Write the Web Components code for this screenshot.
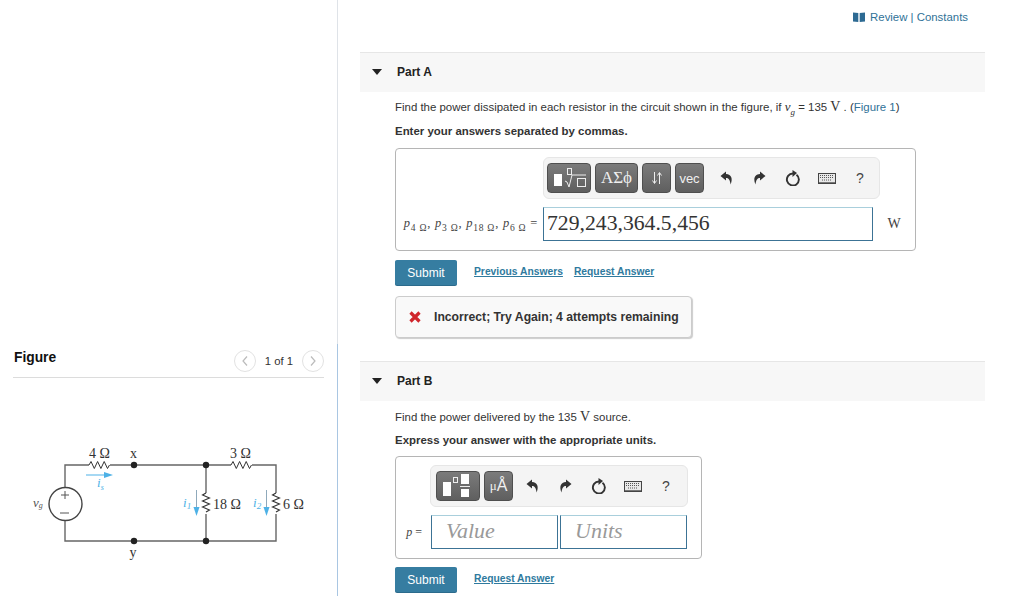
<!DOCTYPE html>
<html lang="en">
<head>
<meta charset="UTF-8">
<title>Part A / Part B</title>
<style>
  html, body { margin: 0; height: 596px; overflow: hidden; background: #fff; }
  body { font-family: "Liberation Sans", Arial, sans-serif; color: #222; }
</style>
<script>
  // small helper, every element below has its markup + styles in the class
  function define(name, css, html) {
    class El extends HTMLElement {
      constructor() {
        super();
        this.attachShadow({ mode: "open" });
        const t = document.createElement("template");
        t.innerHTML = `<style>${css}</style>${html}`;
        this.shadowRoot.appendChild(t.content.cloneNode(true));
      }
    }
    customElements.define(name, El);
  }

  const BASE = `:host{display:block;font-family:"Liberation Sans",Arial,sans-serif;box-sizing:border-box}`;

  define("quiz-page", `
    :host{display:grid;grid-template-columns:338px 1fr;height:596px;overflow:hidden}
    .left{border-right:1px solid #dfe3e8;box-sizing:border-box;height:596px;padding-top:344px;position:relative}
    .left::after{content:"";position:absolute;right:-1px;top:344px;bottom:0;width:1px;background:#a9c6e2}
    .right{padding:0 39px 0 22px;box-sizing:border-box}
  `, `<div class="left"><slot name="left"></slot></div><div class="right"><slot></slot></div>`);

  define("figure-pane", BASE + `
    :host{padding:0 13px}
    .head{display:flex;justify-content:space-between;align-items:center;height:33px;border-bottom:1px solid #dcdcdc}
    h2{margin:0;font-size:13.8px;font-weight:bold;color:#111;position:relative;top:-3px;left:1px}
    .pager{display:flex;align-items:center;font-size:11.300px;color:#333;gap:9px}
    .c{width:22px;height:22px;border:1px solid #e2e2e2;border-radius:50%;box-sizing:border-box;display:flex;align-items:center;justify-content:center}
    svg{display:block}
    .fig{margin:0 -13px}
  `, `<div class="head"><h2>Figure</h2>
    <div class="pager">
      <span class="c"><svg width="8" height="12" viewBox="0 0 8 12"><path d="M6 1.500 2 6l4 4.500" fill="none" stroke="#bbb" stroke-width="1.200"/></svg></span>
      <span>1 of 1</span>
      <span class="c"><svg width="8" height="12" viewBox="0 0 8 12"><path d="M2 1.500 6 6l-4 4.500" fill="none" stroke="#bbb" stroke-width="1.200"/></svg></span>
    </div></div><div class="fig"><slot></slot></div>`);

  define("circuit-fig", `:host{display:block;height:218px} svg{display:block} text{font-family:"Liberation Serif",serif}`, `
    <svg width="338" height="218" viewBox="0 378 338 218">
      <g fill="none" stroke="#666" stroke-width="1.400">
        <path d="M65 488V465H89M110 465H231M252 465H276V493M276 514V541H65V520M206 465V493M206 514V541"/>
        <path d="M89 465l2-3.500 3.300 7 3.300-7 3.300 7 3.300-7 3.300 7 2-3.500M231 465l2-3.500 3.300 7 3.300-7 3.300 7 3.300-7 3.300 7 2-3.500" stroke="#333" stroke-width="1"/>
        <path d="M206 493l-3.500 2 7 3-7 3 7 3-7 3 7 3-3.500 2M276 493l-3.500 2 7 3-7 3 7 3-7 3 7 3-3.500 2" stroke="#333" stroke-width="1.100"/>
        <circle cx="65.500" cy="504" r="16.500" stroke="#444"/>
        <path d="M61 495h8M65 491v8M60 513h9" stroke="#555" stroke-width="1"/>
      </g>
      <g fill="#222">
        <circle cx="134" cy="465" r="3.200"/><circle cx="206" cy="465" r="3.200"/>
        <circle cx="134" cy="541" r="3.200"/><circle cx="206" cy="541" r="3.200"/>
      </g>
      <g fill="#4db1e6" stroke="none">
        <path d="M86 474.500h18v1h-18z"/><path d="M104 472l9 3-9 3z"/>
        <path d="M196 490h1v20h-1z" fill="#8fa9bb"/><path d="M193.500 507l3 9 3-9z"/>
        <path d="M266 490h1v20h-1z" fill="#8fa9bb"/><path d="M263.500 507l3 9 3-9z"/>
      </g>
      <g font-size="14" fill="#333">
        <text x="89" y="458">4 Ω</text>
        <text x="130" y="458">x</text>
        <text x="230" y="458">3 Ω</text>
        <text x="213" y="509">18 Ω</text>
        <text x="283" y="509">6 Ω</text>
        <text x="129.500" y="557">y</text>
      </g>
      <g font-size="13" font-style="italic" fill="#4db1e6">
        <text x="97" y="487">i<tspan font-size="8" dy="3">s</tspan></text>
        <text x="183" y="507">i<tspan font-size="9" dy="2">1</tspan></text>
        <text x="253" y="507">i<tspan font-size="9" dy="2">2</tspan></text>
      </g>
      <text x="33" y="507" font-size="13" font-style="italic" fill="#555">v<tspan font-size="8" dy="1">g</tspan></text>
    </svg>`);

  define("review-bar", BASE + `
    :host{display:flex;justify-content:flex-end;align-items:center;gap:5px;height:34px;padding:0 17px 0 0;margin-bottom:18px;font-size:11.400px;color:#2f7197}
    svg{display:block}
  `, `<svg width="12" height="10" viewBox="0 0 12 10"><path d="M0 .5 5.300 1v9L0 9.500zM6.700 1 12 .5v9L6.700 10z" fill="#2d6a93"/></svg><span>Review | Constants</span>`);

  define("part-section", BASE + `
    .h{height:40px;background:#f7f7f7;border-top:1px solid #e6e6e6;box-sizing:border-box;display:flex;align-items:center;padding:0 0 2px 12px;font-size:12px;font-weight:bold;color:#222}
    .tri{width:0;height:0;border:5px solid transparent;border-top:6px solid #222;border-bottom:0;margin-right:15px}
    .b{padding-left:35px;width:590px}
  `, `<div class="h"><span class="tri"></span><slot name="title"></slot></div><div class="b"><slot></slot></div>`);

  define("prompt-text", BASE + `
    :host{font-size:11.450px;color:#333;line-height:14px}
    .l{height:14px;margin-top:var(--first,8px);white-space:nowrap}
    .a{font-weight:bold;color:#333;margin-top:var(--second,10px)}
  `, `<div class="l"><slot></slot></div><div class="l a"><slot name="bold"></slot></div>`);

  define("math-tools", BASE + `
    :host{display:flex;align-items:center;background:#f4f4f4;border:1px solid #e6e6e6;border-radius:6px;box-sizing:border-box;height:42px;padding:0 0 0 var(--pad,5px)}
    .g{display:flex;gap:4px}
    .ic{display:flex;align-items:center;margin-left:var(--ic,5px)}
    .ic span{width:33.300px;display:flex;justify-content:center}
    svg{display:block}
    .q{font-size:14px;color:#444}
  `, `<div class="g"><slot></slot></div><div class="ic">
      <span><svg width="13" height="14" viewBox="0 0 13 14"><path d="M6 .5.500 5 6 9.500V7c2.500 0 4 1.700 4.500 6.500C13 8 11.500 3.200 6 3z" fill="#333"/></svg></span>
      <span><svg width="13" height="14" viewBox="0 0 13 14"><path d="M7 .5 12.500 5 7 9.500V7C4.500 7 3 8.700 2.500 13.500 0 8 1.500 3.200 7 3z" fill="#333"/></svg></span>
      <span><svg width="16" height="16" viewBox="0 0 16 16"><path d="M8 3.500a6 6 0 1 0 3.500 1.200" fill="none" stroke="#333" stroke-width="1.900"/><path d="M7.500 0v7L12 3z" fill="#333"/></svg></span>
      <span><svg width="18" height="11" viewBox="0 0 18 11"><rect x=".5" y=".5" width="17" height="10" fill="#e8e8e8" stroke="#444"/><path d="M2 2.500h14M2 4.500h14M4 7h10" stroke="#555" stroke-dasharray="1 1"/><path d="M1 9.500h16" stroke="#777"/></svg></span>
      <span class="q">?</span></div>`);

  define("tool-btn", `
    :host{display:flex;align-items:center;justify-content:center;height:30px;box-sizing:border-box;border:1px solid #4f4f4f;border-radius:4px;background:linear-gradient(#7b7b7b,#5f5f5f);color:#f0f0f0;font-size:13px;font-family:"Liberation Sans",Arial,sans-serif}
    ::slotted(span){font-family:"Liberation Serif",serif;font-size:16px}
    svg{display:block}
  `, `<slot></slot>`);

  define("answer-box", BASE + `
    :host{border:1px solid #b5b5b5;border-radius:4px;box-sizing:border-box;padding:8px 0 9px 0;margin-top:var(--top,10px)}
    .bar{display:flex;margin-bottom:8px}
    .row{display:flex;align-items:center;height:34px}
  `, `<div class="bar"><slot name="tools"></slot></div><div class="row"><slot></slot></div>`);

  define("math-label", `
    :host{display:flex;align-items:baseline;justify-content:flex-end;align-self:center;font-family:"Liberation Serif",serif;font-size:12.500px;color:#444;white-space:pre;padding-right:5px;box-sizing:border-box}
    ::slotted(i){font-style:italic}
  `, `<div><slot></slot></div>`);

  define("field-box", `
    :host{display:flex;align-items:center;box-sizing:border-box;height:34px;padding-bottom:2px;background:#fff;border:1px solid #3c7395;border-top-color:#a9cfdc;font-family:"Liberation Serif",serif;font-size:21.700px;color:#333;padding-left:3px;white-space:nowrap}
    :host([empty]){color:#999;font-style:italic;font-size:22px;padding-left:14px}
  `, `<slot></slot>`);

  define("action-row", BASE + `
    :host{display:flex;align-items:flex-start;margin-top:var(--top,9px);height:25px;font-size:10.300px}
    .s{width:62px;height:25px;background:#367da1;color:#fff;border-radius:2px;font-size:12px;display:flex;align-items:center;justify-content:center;margin-right:17px;box-shadow:0 1px 0 #2c6b8c}
    .ln{display:flex;gap:11px;margin-top:6px;font-weight:bold;color:#2f7a9e}
    ::slotted(a){text-decoration:underline;color:#2f7a9e}
  `, `<div class="s">Submit</div><div class="ln"><slot></slot></div>`);

  define("feedback-card", BASE + `
    :host{display:inline-flex;align-items:center;height:42px;box-sizing:border-box;margin-top:11px;padding:0 12px 0 13px;background:#f9f9f9;border:1px solid #ccc;border-radius:4px;box-shadow:1px 1px 1px #ccc;font-size:12.200px;font-weight:bold;color:#333;white-space:nowrap}
    svg{margin-right:13px;display:block}
  `, `<svg width="12" height="12" viewBox="0 0 12 12"><path d="M1.500 1.500l9 9M10.500 1.500l-9 9" stroke="#d0262c" stroke-width="3.200"/></svg><slot></slot>`);
</script>
</head>
<body>
<quiz-page>
  <figure-pane slot="left"><circuit-fig></circuit-fig></figure-pane>

  <review-bar></review-bar>

  <part-section style="height:309px">
    <span slot="title">Part A</span>
    <prompt-text>Find the power dissipated in each resistor in the circuit shown in the figure, if <i style="font-family:'Liberation Serif',serif;font-size:13px">v<sub style="font-size:9px">g</sub></i> = 135 <span style="font-family:'Liberation Serif',serif;font-size:14px">V</span> . (<span style="color:#2f7197">Figure 1</span>)
      <span slot="bold">Enter your answers separated by commas.</span></prompt-text>
    <answer-box style="width:521px">
      <math-tools slot="tools" style="margin-left:147px;width:337px;--pad:3px;--ic:6px">
        <tool-btn style="width:44px"><svg width="38" height="24" viewBox="0 0 38 24"><rect x="4" y="8" width="8" height="12" fill="#fff"/><rect x="17.500" y="2.500" width="4" height="6" fill="none" stroke="#eee"/><path d="M15 15l2 1 2 5 3-12h14" fill="none" stroke="#eee"/><rect x="27.500" y="12.500" width="8" height="8" fill="none" stroke="#eee"/></svg></tool-btn>
        <tool-btn style="width:43px"><span style="font-size:17px">ΑΣϕ</span></tool-btn>
        <tool-btn style="width:29px"><svg width="14" height="14" viewBox="0 0 14 14"><path d="M4.500 1v11M2.500 9.500l2 3 2-3M9.500 13V2M7.500 4.500l2-3 2 3" fill="none" stroke="#eee"/></svg></tool-btn>
        <tool-btn style="width:29px">vec</tool-btn>
      </math-tools>
      <math-label style="width:147px;letter-spacing:.75px"><i>p</i><sub style="font-size:9.500px">4 Ω</sub>, <i>p</i><sub style="font-size:9.500px">3 Ω</sub>, <i>p</i><sub style="font-size:9.500px">18 Ω</sub>, <i>p</i><sub style="font-size:9.500px">6 Ω</sub> =</math-label>
      <field-box style="width:330px">729,243,364.5,456</field-box>
      <math-label style="width:38px;font-size:14px;padding:0;justify-content:center;margin-left:2px">W</math-label>
    </answer-box>
    <action-row><a>Previous Answers</a><a>Request Answer</a></action-row>
    <feedback-card>Incorrect; Try Again; 4 attempts remaining</feedback-card>
  </part-section>

  <part-section>
    <span slot="title">Part B</span>
    <prompt-text style="--first:9px;--second:9px">Find the power delivered by the 135 <span style="font-family:'Liberation Serif',serif;font-size:14px">V</span> source.
      <span slot="bold">Express your answer with the appropriate units.</span></prompt-text>
    <answer-box style="width:307px;--top:9px">
      <math-tools slot="tools" style="margin-left:34px;width:258px;--ic:3px">
        <tool-btn style="width:44px"><svg width="38" height="24" viewBox="0 0 38 24"><rect x="4" y="8" width="8" height="14" fill="#fff"/><rect x="14.500" y="3.500" width="4" height="5" fill="none" stroke="#eee"/><rect x="22" y="0" width="8" height="10" fill="#fff"/><path d="M21 12.500h10" stroke="#eee"/><rect x="22" y="15" width="8" height="8" fill="#fff"/></svg></tool-btn>
        <tool-btn style="width:29px"><span style="font-size:13px">μ</span><span style="font:16px 'Liberation Sans',sans-serif">Å</span></tool-btn>
      </math-tools>
      <math-label style="width:35px;font-size:12px;padding-right:9px"><i>p</i> =</math-label>
      <field-box empty style="width:127px">Value</field-box>
      <field-box empty style="width:127px;margin-left:2px">Units</field-box>
    </answer-box>
    <action-row style="--top:8px"><a>Request Answer</a></action-row>
  </part-section>
</quiz-page>
</body>
</html>
